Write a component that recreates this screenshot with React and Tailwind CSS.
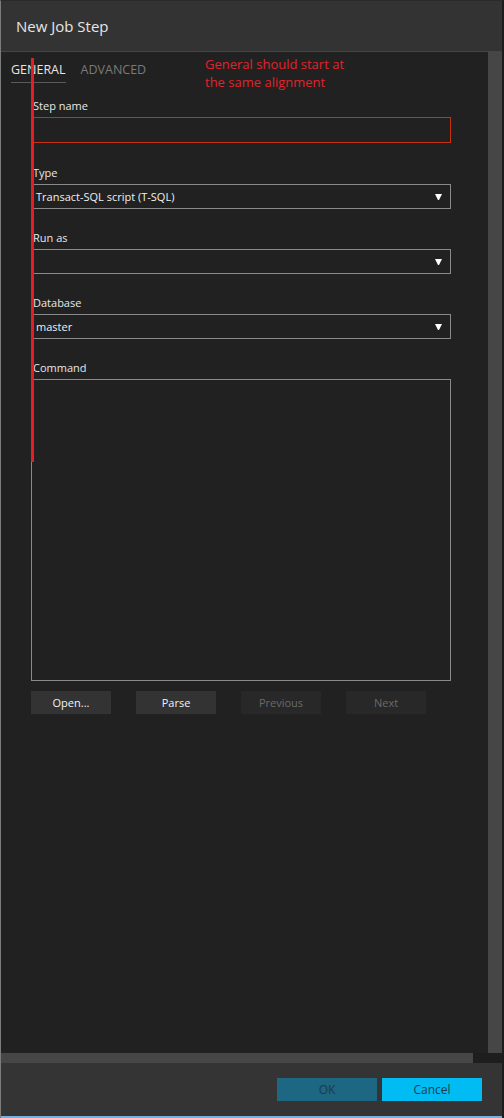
import React from 'react';

const font = { fontFamily: '"Open Sans", "Noto Sans", sans-serif' };

const Arrow = () => (
    <svg width="7" height="6" viewBox="0 0 7 6" className="absolute right-[8px] top-[9px]">
        <path d="M0 0 H7 L4 6 H3 Z" fill="#ffffff" />
    </svg>
);

const Field = ({ label, top, children }) => (
    <div style={{ marginTop: top }}>
        <div className="h-[15px] text-[11px] leading-[15px] text-[#e8e8e8] pl-[2px]">{label}</div>
        <div className="mt-[4px]">{children}</div>
    </div>
);

const Select = ({ value }) => (
    <div className="relative h-[25px] w-[420px] border border-[#8a8a8a] text-[11px] leading-[23px] text-[#f0f0f0] pl-[4px]">
        {value}
        <Arrow />
    </div>
);

const SmallButton = ({ label, disabled }) => (
    <div
        className={
            disabled
                ? "w-[80px] h-[23px] bg-[#282828] text-[#6a6a6a] text-[11px] leading-[23px] text-center"
                : "w-[80px] h-[23px] bg-[#333333] text-[#f2f2f2] text-[11px] leading-[23px] text-center"
        }
    >
        {label}
    </div>
);

export default function App() {
    return (
        <div className="w-[504px] h-[1118px] flex flex-col bg-[#212121] border-l border-[#7c7c7c] border-t border-t-[#2a2a2a] border-r-2 border-r-[#1c1c1c] overflow-hidden" style={font}>
            {/* Header */}
            <div className="h-[51px] shrink-0 bg-[#333333] border-b border-[#454545] flex items-center pl-[15px]">
                <span className="text-[15px] text-[#e6e6e6]">New Job Step</span>
            </div>

            {/* Body with vertical scrollbar */}
            <div className="flex-1 flex min-h-0">
                <div className="flex-1 relative pt-[10px]">
                    {/* tabs */}
                    <div className="flex pl-[10px] text-[12.5px] leading-[16px]">
                        <div className="pb-[4px] border-b border-[#5a5a5a] text-[#e6e6e6]">GENERAL</div>
                        <div className="ml-[15px] text-[#7a7a7a]">ADVANCED</div>
                    </div>

                    <div className="pl-[30px]">
                        <Field label="Step name" top={15}>
                            <div className="h-[26px] w-[420px] border border-[#c8330f]" />
                        </Field>
                        <Field label="Type" top={22}>
                            <Select value="Transact-SQL script (T-SQL)" />
                        </Field>
                        <Field label="Run as" top={21}>
                            <Select value="" />
                        </Field>
                        <Field label="Database" top={21}>
                            <Select value="master" />
                        </Field>
                        <Field label="Command" top={21}>
                            <div className="h-[302px] w-[420px] border border-[#8a8a8a]" />
                        </Field>
                        <div className="mt-[10px] flex gap-[25px]">
                            <SmallButton label="Open..." />
                            <SmallButton label="Parse" />
                            <SmallButton label="Previous" disabled />
                            <SmallButton label="Next" disabled />
                        </div>
                    </div>

                    {/* annotation overlay */}
                    <div className="absolute left-[30px] top-[6px] w-[3px] h-[404px] bg-[#e81c24]" />
                    <div className="absolute left-[204px] top-[3px] text-[13px] leading-[18px] text-[#e3222a]">
                        General should start at
                        <br />
                        the same alignment
                    </div>
                </div>
                <div className="w-[14px] bg-[#464646] shrink-0" />
            </div>

            {/* horizontal scrollbar */}
            <div className="h-[10px] shrink-0 flex">
                <div className="w-[472px] bg-[#464646]" />
                <div className="flex-1 bg-[#1e1e1e]" />
            </div>

            {/* Footer */}
            <div className="h-[53px] shrink-0 bg-[#343434] flex justify-end items-start pt-[15px] pr-[20px] gap-[5px]">
                <div className="w-[100px] h-[23px] bg-[#1e6782] text-[#1b3a4a] text-[12px] leading-[23px] text-center">OK</div>
                <div className="w-[100px] h-[23px] bg-[#00bcf2] text-[#1f3a4d] text-[12px] leading-[23px] text-center">Cancel</div>
            </div>
            <div className="h-[2px] shrink-0 bg-[#7aaedb]" />
        </div>
    );
}
